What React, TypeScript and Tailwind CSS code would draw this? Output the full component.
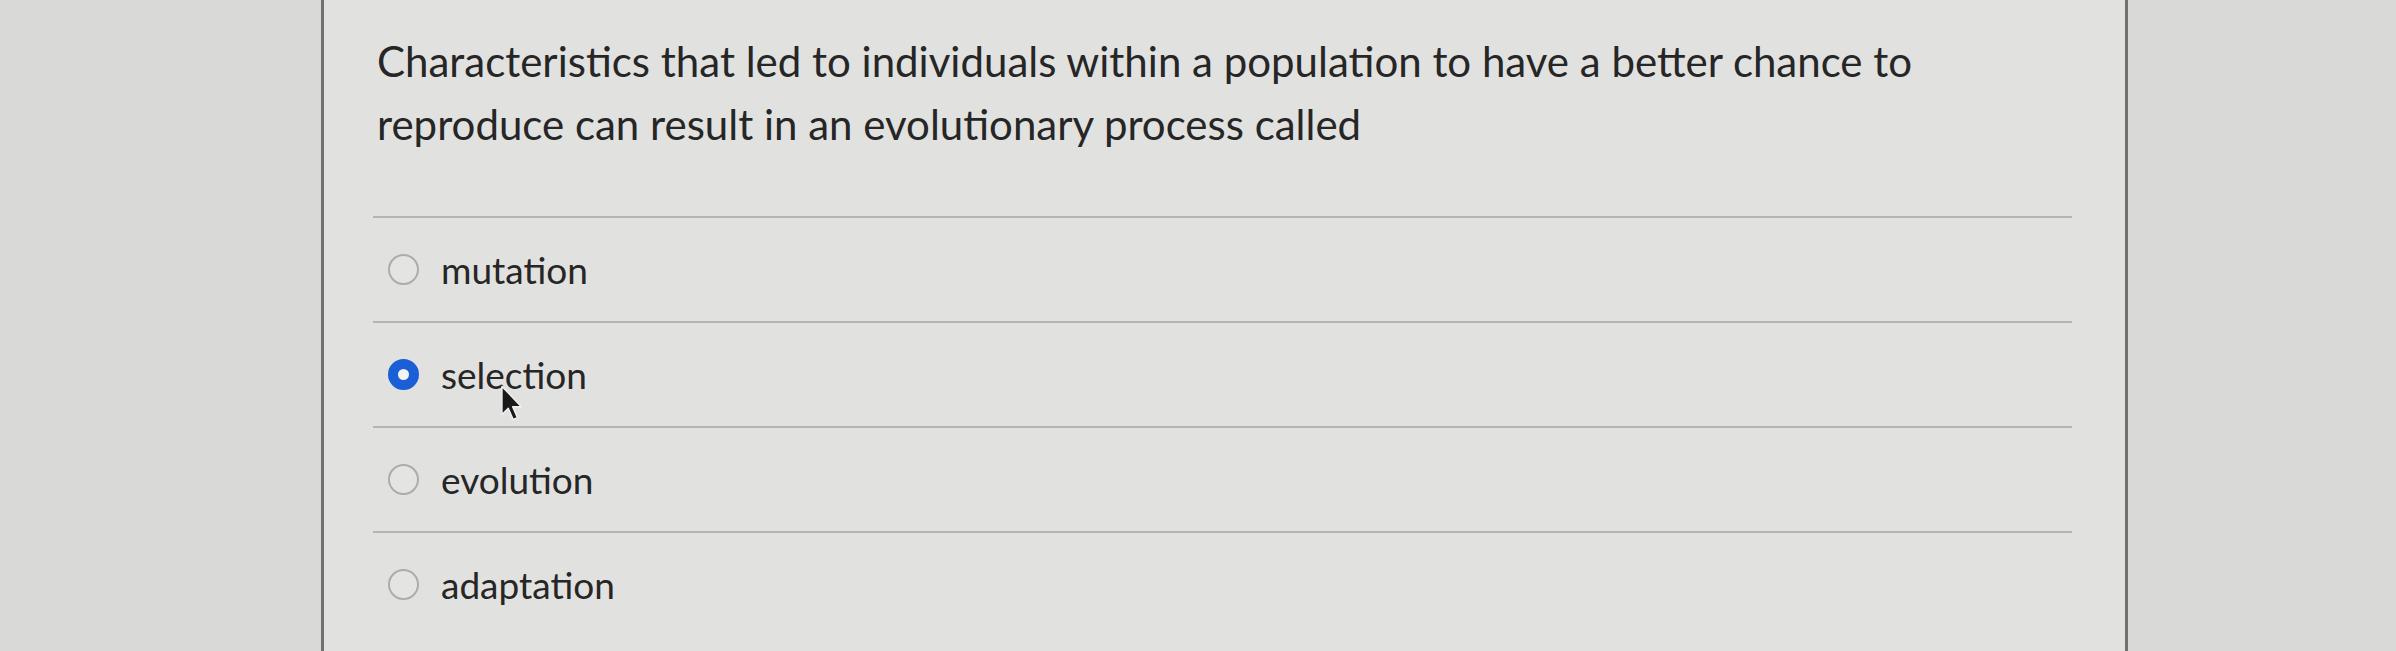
const options = [
  { label: 'mutation', selected: false },
  { label: 'selection', selected: true },
  { label: 'evolution', selected: false },
  { label: 'adaptation', selected: false },
]

function Cursor() {
  return (
    <svg
      className="absolute left-[127px] top-[62px]"
      width="25"
      height="38"
      viewBox="0 0 17 27"
    >
      <path
        d="M1 1 L1 21 L5.5 16.5 L9 24.5 L12 23.2 L8.6 15.4 L14.8 15.4 Z"
        fill="#1a1a1a"
        stroke="#f2f2f2"
        strokeWidth="1"
        strokeLinejoin="round"
      />
    </svg>
  )
}

export default function App() {
  return (
    <div
      className="flex min-h-[651px] w-full bg-[#d9d9d7] text-[#262626]"
      style={{ fontFamily: 'Lato, "Noto Sans", sans-serif' }}
    >
      <div className="w-[321px] shrink-0" />
      <div className="w-[1807px] shrink-0 border-x-[3px] border-[#717174] bg-[#e1e1df] pt-[30px]">
        {/* Question */}
        <p className="pl-[53px] text-[42px] leading-[63px] whitespace-nowrap">
          Characteristics that led to individuals within a population to have a better chance to
          <br />
          reproduce can result in an evolutionary process called
        </p>

        {/* Answers */}
        <div className="ml-[49px] mr-[53px] mt-[60px]">
          {options.map(({ label, selected }) => (
            <div
              key={label}
              className="relative flex h-[105px] items-center gap-[22px] border-t-2 border-[#b4b4b2] pl-[15px]"
            >
              {selected ? (
                <span className="h-[31px] w-[31px] shrink-0 rounded-full border-[10px] border-[#1b5fd6] bg-[#f4f4f4]" />
              ) : (
                <span className="h-[31px] w-[31px] shrink-0 rounded-full border-2 border-[#acacaa] bg-[#e4e4e2]" />
              )}
              <span className="text-[37px] leading-none">{label}</span>
              {selected && <Cursor />}
            </div>
          ))}
        </div>
      </div>
    </div>
  )
}
